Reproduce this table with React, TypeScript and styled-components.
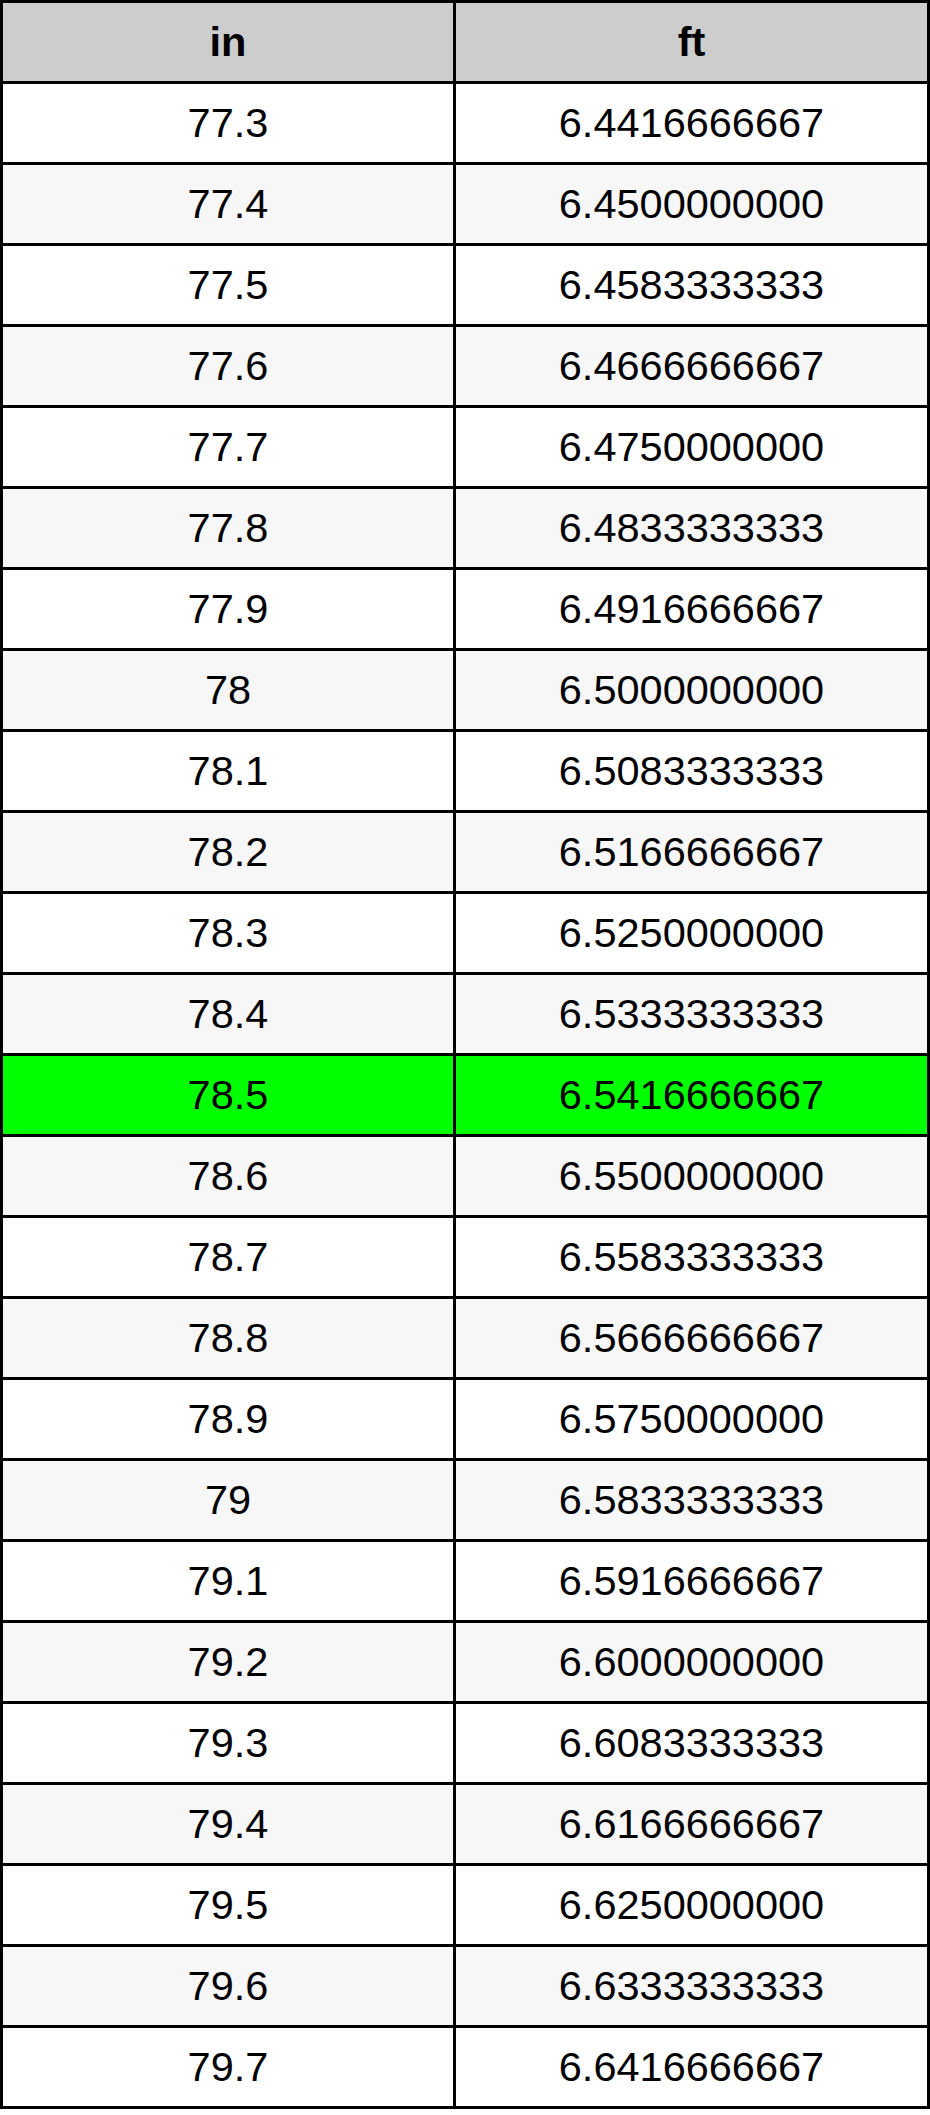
import React from "react"
import styled, { createGlobalStyle } from "styled-components"

const GlobalStyle = createGlobalStyle`
  html, body {
    margin: 0;
    padding: 0;
    background: #fff;
  }
  body {
    font-family: "Liberation Sans", Arial, sans-serif;
    color: #000;
  }
`

const rows: [string, string][] = [
  ["77.3", "6.4416666667"],
  ["77.4", "6.4500000000"],
  ["77.5", "6.4583333333"],
  ["77.6", "6.4666666667"],
  ["77.7", "6.4750000000"],
  ["77.8", "6.4833333333"],
  ["77.9", "6.4916666667"],
  ["78", "6.5000000000"],
  ["78.1", "6.5083333333"],
  ["78.2", "6.5166666667"],
  ["78.3", "6.5250000000"],
  ["78.4", "6.5333333333"],
  ["78.5", "6.5416666667"],
  ["78.6", "6.5500000000"],
  ["78.7", "6.5583333333"],
  ["78.8", "6.5666666667"],
  ["78.9", "6.5750000000"],
  ["79", "6.5833333333"],
  ["79.1", "6.5916666667"],
  ["79.2", "6.6000000000"],
  ["79.3", "6.6083333333"],
  ["79.4", "6.6166666667"],
  ["79.5", "6.6250000000"],
  ["79.6", "6.6333333333"],
  ["79.7", "6.6416666667"],
]

const HIGHLIGHT = "78.5"

export default function App() {
  return (
    <>
      <GlobalStyle />
      <Table>
        <colgroup>
          <col style={{ width: 450 }} />
          <col style={{ width: 471 }} />
        </colgroup>
        <thead>
          <tr>
            <HeadCell>in</HeadCell>
            <HeadCell>ft</HeadCell>
          </tr>
        </thead>
        <tbody>
          {rows.map(([inches, feet], i) => (
            <Row key={inches} $shade={inches === HIGHLIGHT ? "hit" : i % 2 ? "alt" : "plain"}>
              <Cell>{inches}</Cell>
              <Cell>{feet}</Cell>
            </Row>
          ))}
        </tbody>
      </Table>
    </>
  )
}

const Table = styled.table`
  width: 930px;
  table-layout: fixed;
  border-collapse: separate;
  border-spacing: 3px;
  background: #000;
`

const HeadCell = styled.th`
  height: 78px;
  padding: 0;
  background: #cdcdcd;
  font-size: 41.5px;
  font-weight: 700;
  text-align: center;
  vertical-align: middle;
`

const Row = styled.tr<{ $shade: "plain" | "alt" | "hit" }>`
  background: ${p => (p.$shade === "hit" ? "#00ff00" : p.$shade === "alt" ? "#f7f7f7" : "#ffffff")};
`

const Cell = styled.td`
  height: 78px;
  padding: 0;
  font-size: 41.5px;
  text-align: center;
  vertical-align: middle;
`
